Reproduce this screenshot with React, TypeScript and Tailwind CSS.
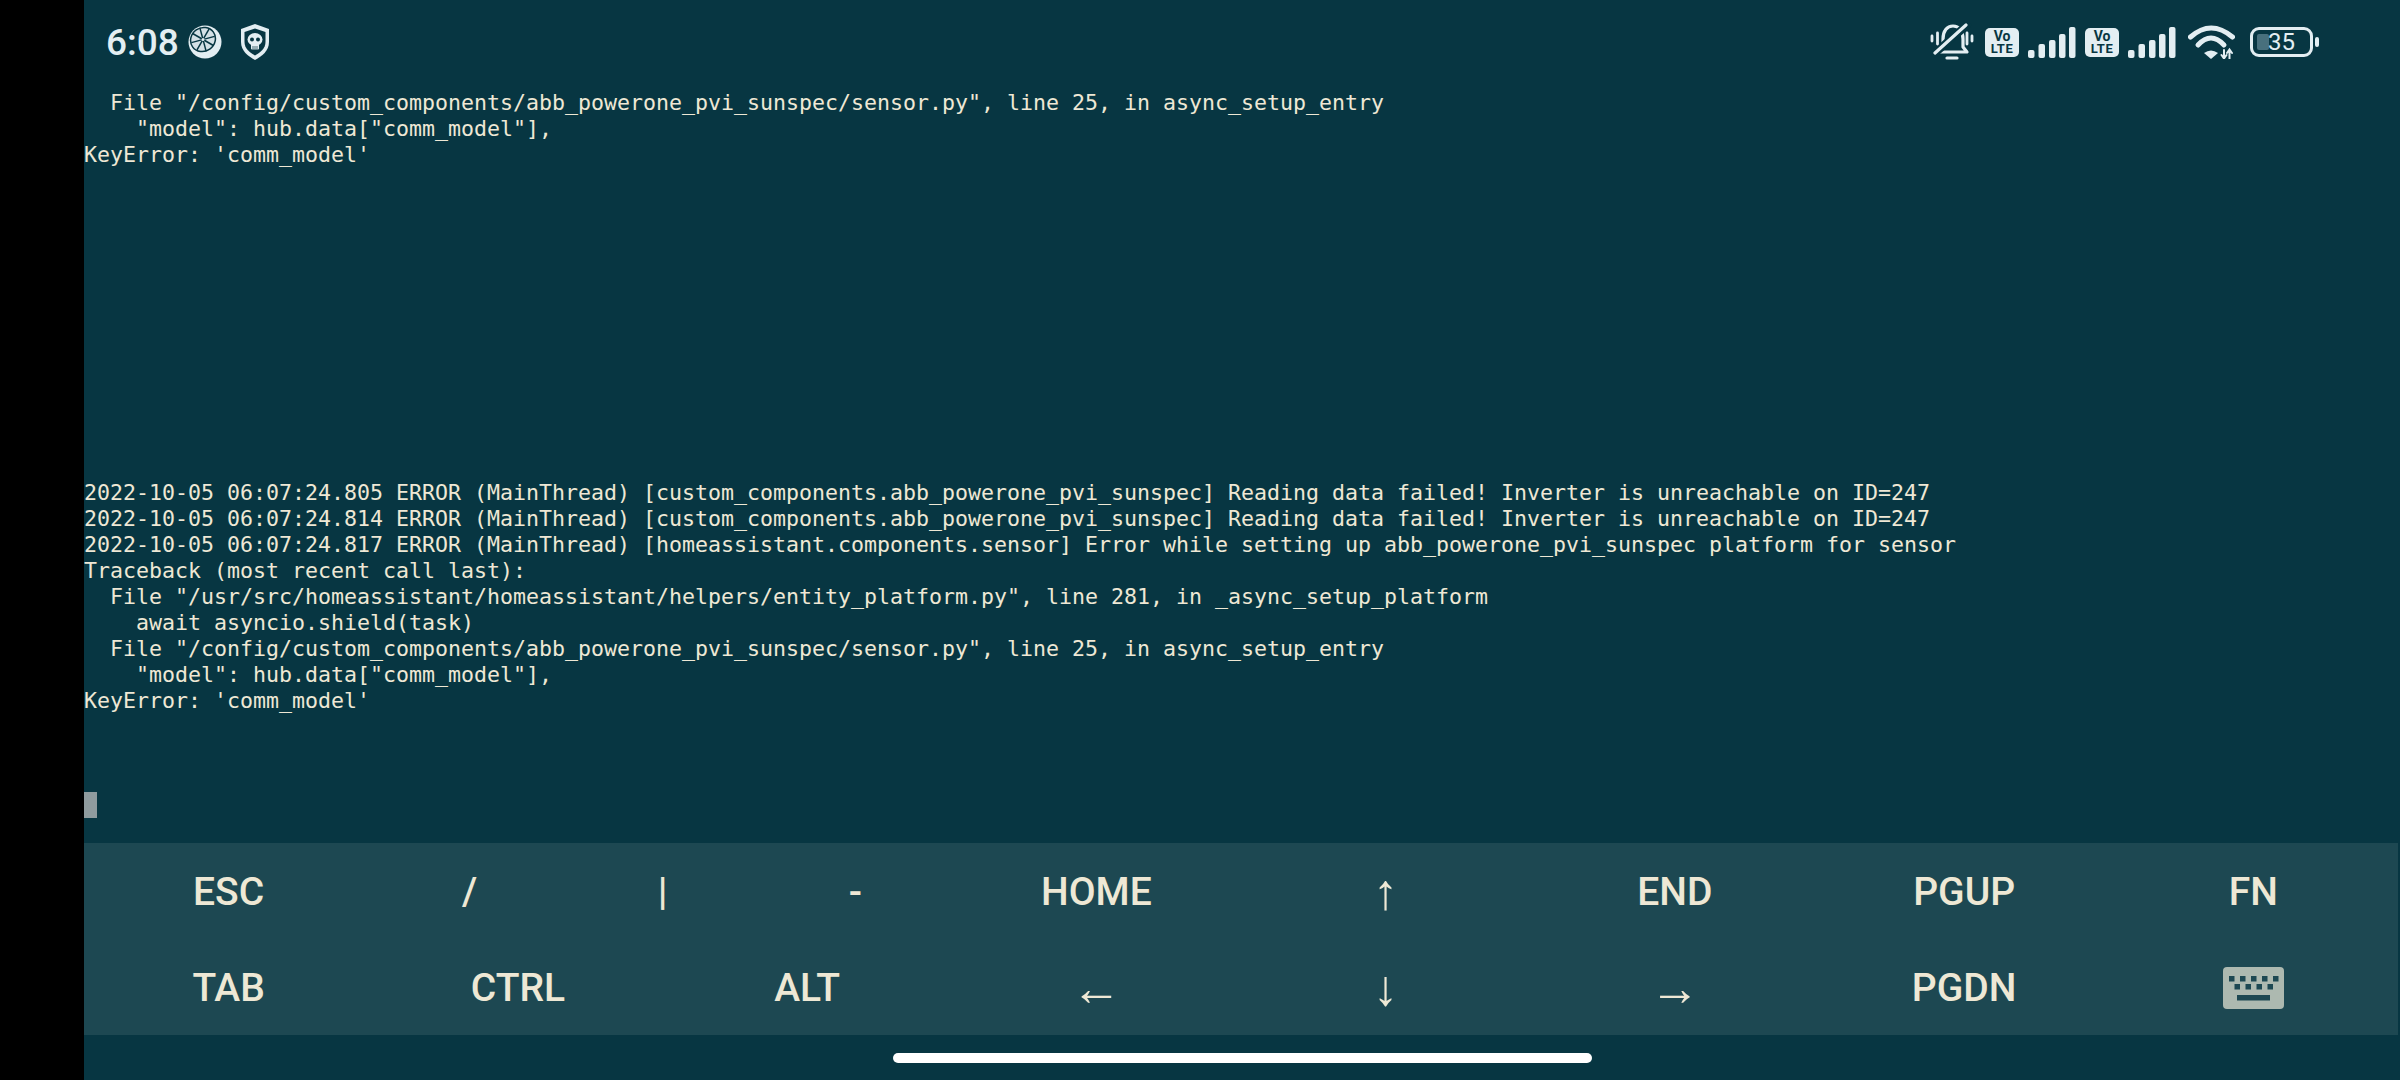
const log = [
  `  File "/config/custom_components/abb_powerone_pvi_sunspec/sensor.py", line 25, in async_setup_entry`,
  `    "model": hub.data["comm_model"],`,
  `KeyError: 'comm_model'`,
  ``, ``, ``, ``, ``, ``, ``, ``, ``, ``, ``, ``,
  `2022-10-05 06:07:24.805 ERROR (MainThread) [custom_components.abb_powerone_pvi_sunspec] Reading data failed! Inverter is unreachable on ID=247`,
  `2022-10-05 06:07:24.814 ERROR (MainThread) [custom_components.abb_powerone_pvi_sunspec] Reading data failed! Inverter is unreachable on ID=247`,
  `2022-10-05 06:07:24.817 ERROR (MainThread) [homeassistant.components.sensor] Error while setting up abb_powerone_pvi_sunspec platform for sensor`,
  `Traceback (most recent call last):`,
  `  File "/usr/src/homeassistant/homeassistant/helpers/entity_platform.py", line 281, in _async_setup_platform`,
  `    await asyncio.shield(task)`,
  `  File "/config/custom_components/abb_powerone_pvi_sunspec/sensor.py", line 25, in async_setup_entry`,
  `    "model": hub.data["comm_model"],`,
  `KeyError: 'comm_model'`,
  ``, ``, ``,
]

function Lime() {
  const spokes = [0, 45, 90, 135]
  return (
    <svg width="34" height="34" viewBox="0 0 34 34" className="ml-[9px]">
      <circle cx="17" cy="17" r="16.5" fill="#e3eef2" />
      <ellipse cx="15" cy="14.5" rx="13.5" ry="12.5" fill="#073642" transform="rotate(-35 15 14.5)" />
      <ellipse cx="15" cy="14.5" rx="12" ry="11" fill="#d3e0e5" transform="rotate(-35 15 14.5)" />
      {spokes.map((a) => (
        <line key={a} x1="3" y1="14.5" x2="27" y2="14.5" stroke="#073642" strokeWidth="1.5" transform={`rotate(${a - 15} 15 14.5)`} />
      ))}
      <circle cx="15" cy="14.5" r="1.5" fill="#e3eef2" />
    </svg>
  )
}

function Shield() {
  return (
    <svg width="30" height="36" viewBox="0 0 30 36" className="ml-[18px]">
      <path d="M15 0 L29 5 V18 C29 27 22 32 15 36 C8 32 1 27 1 18 V5 Z" fill="#e3eef2" />
      <path d="M15 4.5 L25.5 8 V18 C25.5 24.5 20.5 28.5 15 31.5 C9.5 28.5 4.5 24.5 4.5 18 V8 Z" fill="#073642" />
      <ellipse cx="15" cy="15.5" rx="7.5" ry="6.5" fill="#e3eef2" />
      <rect x="11" y="19" width="8" height="6.5" rx="1" fill="#e3eef2" />
      <circle cx="12" cy="15.5" r="2" fill="#073642" />
      <circle cx="18" cy="15.5" r="2" fill="#073642" />
      <path d="M13 22 V25.5 M15 22 V25.5 M17 22 V25.5" stroke="#073642" strokeWidth="0.7" />
    </svg>
  )
}

function MutedBell() {
  return (
    <svg width="44" height="38" viewBox="0 0 44 38" fill="none" stroke="#e3eef2" strokeLinecap="round">
      <path d="M13 24 V16 C13 8 17 3 23 3 C29 3 33 8 33 16 V24 L37 29 H9 Z" strokeWidth="3.2" strokeLinejoin="round" />
      <path d="M5 30 L37 2" stroke="#073642" strokeWidth="8" />
      <path d="M5 30 L36 2" strokeWidth="3.2" />
      <path d="M17 35 H27" strokeWidth="3.2" />
      <path d="M2 13 V18 M7.5 10 V21 M37 10 V21 M42 13 V18" strokeWidth="2.8" />
    </svg>
  )
}

function VoLte() {
  return (
    <div className="w-[34px] h-[29px] rounded-[5px] bg-[#e3eef2] flex flex-col items-center justify-center text-[#073642] font-['Roboto',sans-serif] font-bold">
      <span className="text-[14px] leading-[13px]">Vo</span>
      <span className="text-[13px] leading-[12px] tracking-[0.5px]">LTE</span>
    </div>
  )
}

function Signal() {
  const bars = [
    { x: 0, h: 8 },
    { x: 10.5, h: 14 },
    { x: 21, h: 18 },
    { x: 31, h: 24 },
    { x: 41, h: 31 },
  ]
  return (
    <svg width="48" height="31" viewBox="0 0 48 31">
      {bars.map((b) => (
        <rect key={b.x} x={b.x} y={31 - b.h} width="6.5" height={b.h} rx="2" fill="#e3eef2" />
      ))}
    </svg>
  )
}

function Wifi() {
  return (
    <svg width="47" height="34" viewBox="0 0 47 34" fill="none" stroke="#e3eef2" strokeLinecap="round">
      <path d="M2.5 12 Q23 -6 44.500 12" strokeWidth="5" />
      <path d="M10 20 Q23 6 36 20" strokeWidth="5" />
      <path d="M16 28 Q23 23 30 28 L23 34 Z" fill="#e3eef2" stroke="none" />
      <path d="M36 25 V33 M33.5 30 L36 33.5 L38.500 30" strokeWidth="2" />
      <path d="M41.500 25 V34 M39 28 L41.500 24.500 L44 28" strokeWidth="2" />
    </svg>
  )
}

function Battery() {
  return (
    <div className="flex items-center gap-[2px] font-['Roboto',sans-serif]">
      <div className="relative w-[63px] h-[30px] rounded-[9px] border-[3px] border-[#e3eef2] flex items-center justify-center">
        <div className="absolute left-[4px] top-[4px] bottom-[4px] w-[12px] rounded-[2px] bg-[#48707d]" />
        <span className="relative text-[24px] leading-none text-[#e3eef2]">35</span>
      </div>
      <div className="w-[4px] h-[10px] rounded-full bg-[#e3eef2]" />
    </div>
  )
}

function KeyboardIcon() {
  const top = [0, 1, 2, 3, 4]
  const mid = [0, 1, 2, 3]
  return (
    <svg width="61" height="42" viewBox="0 0 61 42">
      <rect width="61" height="42" rx="4" fill="#adb9b0" />
      {top.map((i) => (
        <rect key={i} x={6 + i * 11} y="9" width="5.500" height="5.500" fill="#1d4852" />
      ))}
      {mid.map((i) => (
        <rect key={i} x={11.500 + i * 11} y="17" width="5.500" height="5.500" fill="#1d4852" />
      ))}
      <rect x="14" y="28" width="33" height="5.500" fill="#1d4852" />
    </svg>
  )
}

function Key({ children }: { children: React.ReactNode }) {
  return <div className="h-24 pt-[2px] flex items-center justify-center">{children}</div>
}

function Arrow({ children }: { children: React.ReactNode }) {
  return <span className="pb-[4px] font-['Noto_Sans',sans-serif] font-bold text-[50px] leading-none">{children}</span>
}

export default function App() {
  return (
    <div className="w-[2400px] h-[1080px] flex bg-black overflow-hidden">
      <div className="w-[84px] shrink-0 bg-black" />
      <div className="flex-1 flex flex-col bg-[#073642]">
        {/* Status bar */}
        <div className="h-[90px] pb-[6px] pl-[22px] pr-[81px] flex items-center justify-between text-[#e3eef2]">
          <div className="flex items-center">
            <span className="font-['Roboto',sans-serif] font-medium text-[37px] leading-none">6:08</span>
            <Lime />
            <Shield />
          </div>
          <div className="flex items-center">
            <MutedBell />
            <div className="ml-[11px]"><VoLte /></div>
            <div className="ml-[9px]"><Signal /></div>
            <div className="ml-[9px]"><VoLte /></div>
            <div className="ml-[9px]"><Signal /></div>
            <div className="ml-[12px]"><Wifi /></div>
            <div className="ml-[15px]"><Battery /></div>
          </div>
        </div>

        {/* Terminal */}
        <div className="h-[753px] font-['DejaVu_Sans_Mono',monospace] text-[21.6px] leading-[26px] text-[#eee8d5] overflow-hidden">
          {log.map((line, i) => (
            <div key={i} className="h-[26px] whitespace-pre">{line}</div>
          ))}
          <div className="h-[26px] w-[13px] bg-[#8f9b9e]" />
        </div>

        {/* Extra keys */}
        <div className="mr-[2px] bg-[#1d4852] grid grid-cols-8 text-[#eee8d5] text-[39px] font-medium font-['Roboto',sans-serif]">
          <Key>ESC</Key>
          <div className="col-span-2 grid grid-cols-3">
            <Key>/</Key>
            <Key>|</Key>
            <Key>-</Key>
          </div>
          <Key>HOME</Key>
          <Key><Arrow>↑</Arrow></Key>
          <Key>END</Key>
          <Key>PGUP</Key>
          <Key>FN</Key>
          <Key>TAB</Key>
          <Key>CTRL</Key>
          <Key>ALT</Key>
          <Key><Arrow>←</Arrow></Key>
          <Key><Arrow>↓</Arrow></Key>
          <Key><Arrow>→</Arrow></Key>
          <Key>PGDN</Key>
          <Key><KeyboardIcon /></Key>
        </div>

        {/* Gesture bar */}
        <div className="flex-1 flex items-start justify-center pt-[18px]">
          <div className="w-[699px] h-[10px] rounded-full bg-white" />
        </div>
      </div>
    </div>
  )
}
